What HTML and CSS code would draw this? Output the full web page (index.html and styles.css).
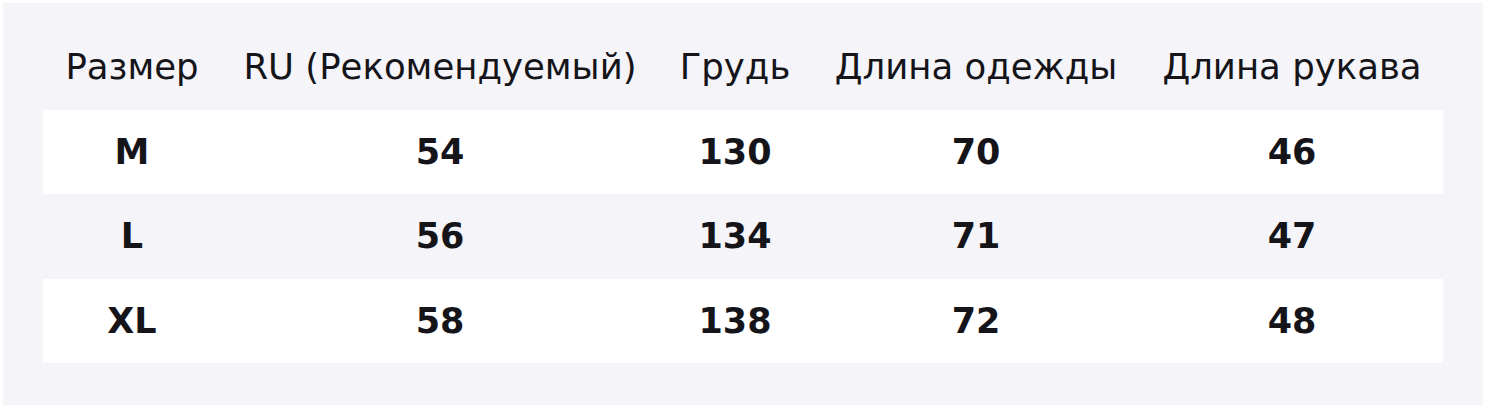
FILE: index.html
```html
<!DOCTYPE html>
<html lang="ru">
<head>
<meta charset="utf-8">
<title>Размеры</title>
<link rel="stylesheet" href="styles.css">
</head>
<body>
<div class="panel">
  <div class="table">
    <div class="row head">
      <div class="cell">Размер</div>
      <div class="cell">RU (Рекомендуемый)</div>
      <div class="cell">Грудь</div>
      <div class="cell">Длина одежды</div>
      <div class="cell">Длина рукава</div>
    </div>
    <div class="row body white">
      <div class="cell">M</div>
      <div class="cell">54</div>
      <div class="cell">130</div>
      <div class="cell">70</div>
      <div class="cell">46</div>
    </div>
    <div class="row body">
      <div class="cell">L</div>
      <div class="cell">56</div>
      <div class="cell">134</div>
      <div class="cell">71</div>
      <div class="cell">47</div>
    </div>
    <div class="row body white">
      <div class="cell">XL</div>
      <div class="cell">58</div>
      <div class="cell">138</div>
      <div class="cell">72</div>
      <div class="cell">48</div>
    </div>
  </div>
</div>
</body>
</html>
```

FILE: styles.css
```css
html, body {
  margin: 0;
  padding: 0;
  background: #ffffff;
}
body {
  font-family: "DejaVu Sans", sans-serif;
  color: #141419;
}
.panel {
  margin: 3px;
  width: 1480px;
  height: 402px;
  box-sizing: border-box;
  padding: 20px 40px 42px 40px;
  background: #f4f4f9;
}
.table {
  display: flex;
  flex-direction: column;
}
.row {
  display: grid;
  grid-template-columns: 178px 438px 152px 330px 302px;
  align-items: center;
}
.cell {
  text-align: center;
  white-space: nowrap;
}
.head {
  height: 87px;
  font-size: 35.5px;
}
.body {
  height: 84.33px;
  font-size: 35px;
  font-weight: bold;
}
.white {
  background: #ffffff;
}
```
